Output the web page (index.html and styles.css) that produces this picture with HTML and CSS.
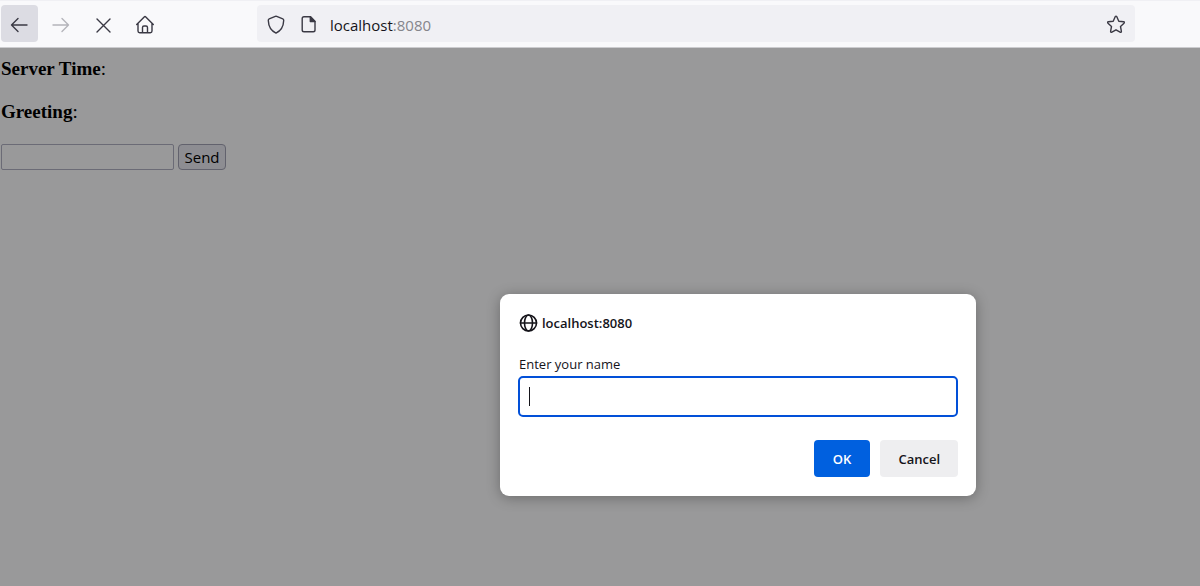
FILE: index.html
```html
<!DOCTYPE html>
<html lang="en">

<head>
    <meta charset="UTF-8">
    <meta name="viewport" content="width=device-width, initial-scale=1.0">
    <title>localhost:8080</title>
    <link rel="stylesheet" href="styles.css">
</head>

<body>
    <header class="toolbar">
        <nav class="nav-buttons">
            <button class="nav-button active" type="button" aria-label="Back">
                <svg width="20" height="20" viewBox="0 0 20 20"><path d="M18 10H2.500M9 3.500L2.500 10L9 16.500" /></svg>
            </button>
            <button class="nav-button" type="button" aria-label="Forward" disabled>
                <svg width="20" height="20" viewBox="0 0 20 20"><path d="M2 10H17.500M11 3.500L17.500 10L11 16.500" /></svg>
            </button>
            <button class="nav-button" type="button" aria-label="Stop">
                <svg width="20" height="20" viewBox="0 0 20 20"><path d="M4 4L17 17M17 4L4 17" /></svg>
            </button>
            <button class="nav-button" type="button" aria-label="Home">
                <svg width="20" height="20" viewBox="0 0 20 20"><path d="M1.700 9.500L9.200 2Q10 1.200 10.800 2L18.300 9.500M3 8.500V16Q3 17.700 4.700 17.700H15.300Q17 17.700 17 16V8.500M7.500 17.500V12.500Q7.500 11 9 11H11Q12.500 11 12.500 12.500V17.500" /></svg>
            </button>
        </nav>
        <div class="url-bar">
            <svg width="20" height="20" viewBox="0 0 20 20"><path d="M9.300 1.400Q10 1.100 10.700 1.400L16.800 3.900Q17.800 4.400 17.700 5.500C17.500 11.500 15.500 15.500 10 18.100C4.500 15.500 2.500 11.500 2.300 5.500Q2.200 4.400 3.200 3.900Z" /></svg>
            <svg class="page-icon" width="20" height="20" viewBox="0 0 20 20"><path d="M11.500 1.700H5Q3.200 1.700 3.200 3.500V15Q3.200 16.800 5 16.800H14.200Q16 16.800 16 15V6.500Z" /><path class="solid" d="M11.300 1.700V6.500H16Z" /></svg>
            <span class="url">localhost<span class="port">:8080</span></span>
            <svg class="star" width="20" height="20" viewBox="0 0 20 20"><path d="M9.200 1.700Q10 0.500 10.800 1.700L12.800 6.200L17.600 6.800Q18.900 7.100 18 8.200L14.500 11.500L15.400 16.300Q15.400 17.800 14.100 17.200L10 14.800L5.900 17.200Q4.600 17.800 4.600 16.300L5.500 11.500L2 8.200Q1.100 7.100 2.400 6.800L7.200 6.200Z" /></svg>
        </div>
    </header>

    <main class="page">
        <p><b>Server Time</b>:</p>
        <p><b>Greeting</b>:</p>
        <form class="message-form">
            <input class="message" type="text" aria-label="Message">
            <button class="send" type="button">Send</button>
        </form>

        <div class="prompt" role="dialog" aria-labelledby="promptTitle">
            <div class="prompt-title">
                <svg width="20" height="20" viewBox="0 0 20 20"><circle cx="10.500" cy="10" r="8" /><ellipse cx="10.500" cy="10" rx="4" ry="8" /><path d="M2.500 10H18.500" /></svg>
                <span id="promptTitle">localhost:8080</span>
            </div>
            <label for="name">Enter your name</label>
            <div class="name-field">
                <input id="name" type="text">
                <span class="caret"></span>
            </div>
            <div class="prompt-buttons">
                <button class="ok" type="button">OK</button>
                <button class="cancel" type="button">Cancel</button>
            </div>
        </div>
    </main>
</body>

</html>
```
FILE: styles.css
```css
* {
    box-sizing: border-box;
}

body {
    margin: 0;
    min-height: 100vh;
    display: flex;
    flex-direction: column;
    font-family: "Liberation Serif", serif;
}

button,
input {
    margin: 0;
    font-family: "Open Sans", sans-serif;
}

svg {
    display: block;
    flex: none;
    fill: none;
    stroke: #3a3944;
    stroke-width: 1.4;
    stroke-linecap: round;
    stroke-linejoin: round;
}

/* Browser toolbar */
.toolbar {
    display: flex;
    align-items: center;
    height: 48px;
    padding: 0 65px 1px 1px;
    background-color: #f9f9fb;
    border-top: 1px solid #f0f0f4;
    border-bottom: 1px solid #cccccf;
}

.nav-buttons {
    display: flex;
    gap: 5px;
    margin-right: 93px;
}

.nav-button {
    display: flex;
    align-items: center;
    width: 37px;
    height: 37px;
    padding: 3px 0 0 8px;
    border: none;
    border-radius: 4px;
    background: none;
}

.nav-button.active {
    background-color: #dcdce3;
}

.nav-button:disabled svg {
    stroke: #b4b4ba;
}

.url-bar {
    flex: 1;
    display: flex;
    align-items: center;
    height: 37px;
    padding: 3px 9px 0;
    border-radius: 4px;
    background-color: #f0f0f4;
}

.page-icon {
    margin: 0 11px 0 13px;
}

.page-icon .solid {
    fill: #3a3944;
}

.url {
    font-family: "Open Sans", sans-serif;
    font-size: 15px;
    color: #15141a;
}

.port {
    color: #85858b;
}

.star {
    margin-left: auto;
}

/* Dimmed page */
.page {
    position: relative;
    flex: 1;
    padding: 10px 0 0 1px;
    background-color: #99999a;
}

.page p {
    margin: 0 0 21px;
    font-size: 19px;
    line-height: 22px;
}

.message-form {
    display: flex;
    gap: 4px;
}

.message {
    width: 173px;
    height: 26px;
    border: 1px solid #6b6b76;
    border-radius: 2px;
    background-color: #99999a;
}

.send {
    width: 48px;
    height: 26px;
    padding: 0;
    border: 1px solid #62626d;
    border-radius: 4px;
    background-color: #8d8d92;
    font-size: 15px;
    line-height: 24px;
}

/* Prompt dialog */
.prompt {
    position: absolute;
    top: 246px;
    right: 224px;
    width: 476px;
    padding: 18px 18px 19px;
    border-radius: 9px;
    background-color: #fff;
    box-shadow: 0 2px 14px rgba(0, 0, 0, 0.3);
    font-family: "Open Sans", sans-serif;
    font-size: 13px;
    line-height: 22px;
    color: #15141a;
}

.prompt-title {
    display: flex;
    align-items: center;
    gap: 4px;
    margin-bottom: 20px;
    font-weight: 600;
}

.prompt-title svg {
    stroke: #15141a;
    stroke-width: 1.6;
}

.prompt label {
    display: block;
    padding-left: 1px;
    margin-bottom: 2px;
    line-height: 20px;
}

.name-field {
    position: relative;
}

.name-field input {
    display: block;
    width: 100%;
    height: 41px;
    padding: 0 9px;
    border: 2px solid #0250d8;
    border-radius: 5px;
    background-color: #fff;
    font-size: 13px;
}

.caret {
    position: absolute;
    top: 11px;
    left: 11px;
    width: 1px;
    height: 19px;
    background-color: #15141a;
}

.prompt-buttons {
    display: flex;
    justify-content: flex-end;
    gap: 10px;
    margin-top: 23px;
}

.prompt-buttons button {
    height: 37px;
    padding: 0 18px;
    border: none;
    border-radius: 4px;
    font-size: 13px;
    font-weight: 600;
}

.prompt-buttons .ok {
    padding: 0 19px;
    background-color: #0060df;
    color: #fff;
}

.cancel {
    background-color: #eeeef0;
    color: #15141a;
}
```
